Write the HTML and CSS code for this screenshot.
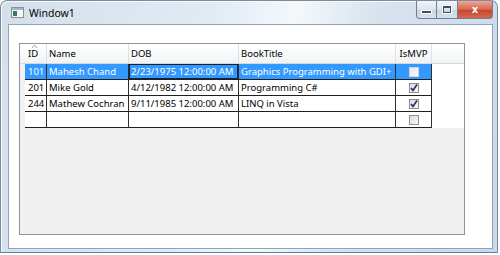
FILE: index.html
```html
<!DOCTYPE html>
<html lang="en">
  <head>
    <meta charset="UTF-8">
    <title>Window1</title>
    <link rel="stylesheet" href="styles.css">
  </head>
  <body>
    <div class="window">
      <div class="titlebar">
        <svg class="app-icon" width="13" height="11" viewBox="0 0 13 11">
          <rect x="0.5" y="0.5" width="12" height="10" fill="#f4f6f8" stroke="#8a9098"/>
          <rect x="1" y="1" width="11" height="2" fill="#9fb8d0"/>
          <rect x="2" y="4" width="4" height="5" fill="#3e7a5a"/>
        </svg>
        <span class="title">Window1</span>
        <div class="caption-buttons">
          <div class="cap-btn min"><span class="min-bar"></span></div>
          <div class="cap-btn max"><span class="max-box"></span></div>
          <div class="cap-btn close">x</div>
        </div>
      </div>

      <div class="client">
        <div class="grid">
          <div class="row header">
            <div class="rowhead"></div>
            <div class="cell c-id">
              <svg class="sort" width="5" height="3" viewBox="0 0 5 3"><path d="M0 3 L2.5 0 L5 3" fill="none" stroke="#9aa4b0"/></svg>
              ID
            </div>
            <div class="cell c-name">Name</div>
            <div class="cell c-dob">DOB</div>
            <div class="cell c-title">BookTitle</div>
            <div class="cell c-mvp">IsMVP</div>
            <div class="cell c-fill"></div>
          </div>

          <div class="row selected">
            <div class="rowhead"></div>
            <div class="cell c-id">101</div>
            <div class="cell c-name">Mahesh Chand</div>
            <div class="cell c-dob focused">2/23/1975 12:00:00 AM</div>
            <div class="cell c-title">Graphics Programming with GDI+</div>
            <div class="cell c-mvp"><span class="check"></span></div>
            <div class="cell c-fill"></div>
          </div>

          <div class="row">
            <div class="rowhead"></div>
            <div class="cell c-id">201</div>
            <div class="cell c-name">Mike Gold</div>
            <div class="cell c-dob">4/12/1982 12:00:00 AM</div>
            <div class="cell c-title">Programming C#</div>
            <div class="cell c-mvp"><span class="check checked"><svg width="8" height="8" viewBox="0 0 8 8"><path d="M1 4 L3 6.5 L7 0.5" fill="none" stroke="#1e2a6e" stroke-width="1.6"/></svg></span></div>
            <div class="cell c-fill"></div>
          </div>

          <div class="row">
            <div class="rowhead"></div>
            <div class="cell c-id">244</div>
            <div class="cell c-name">Mathew Cochran</div>
            <div class="cell c-dob">9/11/1985 12:00:00 AM</div>
            <div class="cell c-title">LINQ in Vista</div>
            <div class="cell c-mvp"><span class="check checked"><svg width="8" height="8" viewBox="0 0 8 8"><path d="M1 4 L3 6.5 L7 0.5" fill="none" stroke="#1e2a6e" stroke-width="1.6"/></svg></span></div>
            <div class="cell c-fill"></div>
          </div>

          <div class="row">
            <div class="rowhead"></div>
            <div class="cell c-id"></div>
            <div class="cell c-name"></div>
            <div class="cell c-dob"></div>
            <div class="cell c-title"></div>
            <div class="cell c-mvp"><span class="check"></span></div>
            <div class="cell c-fill"></div>
          </div>
        </div>
      </div>
    </div>
  </body>
</html>
```

FILE: styles.css
```css
body{
    margin: 0;
    background-color: white;
    font-family: "Noto Sans", "Liberation Sans", sans-serif;
}

.window{
    width: 485px;
    height: 248px;
    display: flex;
    flex-direction: column;
    border: 1px solid #7d8c9c;
    border-bottom-color: #3f8aa4;
    border-radius: 7px 7px 0 0;
    padding: 0 4px 3px 7px;
    background: linear-gradient(100deg, #d3dfeb 0%, #e2ebf4 40%, #f4f8fb 55%, #d8e3ee 70%, #cbd9e7 100%);
    box-shadow: inset 1px 1px 0 #f6f9fc;
}

.titlebar{
    height: 23px;
    display: flex;
    align-items: center;
}

.app-icon{
    margin-left: 3px;
    margin-right: 5px;
}

.title{
    font-size: 10.5px;
    color: #000;
}

.caption-buttons{
    margin-left: auto;
    align-self: flex-start;
    display: flex;
    height: 18px;
}

.cap-btn{
    height: 17px;
    border: 1px solid #6f7e90;
    border-top: none;
    display: flex;
    align-items: center;
    justify-content: center;
    background: linear-gradient(#f2f5f9, #dbe3ec 50%, #c7d3df 51%, #d8e2ec);
}

.min{
    width: 19px;
    border-radius: 0 0 0 4px;
}

.max{
    width: 20px;
    border-left: none;
}

.close{
    width: 34px;
    border-left: none;
    border-radius: 0 0 4px 0;
    background: linear-gradient(#e9a897, #d7654d 50%, #c4432c 51%, #d66a4e);
    color: white;
    font-family: "DejaVu Sans", sans-serif;
    font-weight: bold;
    font-size: 10px;
    line-height: 10px;
}

.min-bar{
    width: 9px;
    height: 2px;
    margin-top: 5px;
    background-color: #3f4d5e;
    border: 1px solid #fff;
}

.max-box{
    width: 6px;
    height: 4px;
    border: 1px solid #3f4d5e;
    border-top-width: 2px;
    box-shadow: 0 0 0 1px #fff;
}

.client{
    flex: 1;
    background-color: white;
    border: 1px solid #90a3bb;
    padding: 18px 27px 13px 10px;
    display: flex;
}

.grid{
    flex: 1;
    border: 1px solid #8a96a4;
    background-color: #f0f0f0;
    font-size: 9.5px;
    color: #000;
}

.row{
    display: flex;
    height: 16px;
}

.rowhead{
    width: 5px;
    flex-shrink: 0;
    background-color: #f0f0f0;
}

.cell{
    border-right: 1px solid #2e2e2e;
    border-bottom: 1px solid #1e1e1e;
    background-color: white;
    padding-left: 2px;
    line-height: 15px;
    white-space: nowrap;
    overflow: hidden;
    flex-shrink: 0;
    box-sizing: border-box;
    height: 16px;
}

.c-id{
    width: 22px;
    padding-left: 3px;
}

.c-name{
    width: 82px;
}

.c-dob{
    width: 110px;
}

.c-title{
    width: 157px;
}

.c-mvp{
    width: 36px;
    display: flex;
    justify-content: center;
    align-items: center;
    padding-left: 0;
}

.c-fill{
    flex: 1;
    border: none;
}

.header{
    height: 20px;
    background: linear-gradient(#ffffff, #f7f8f9 60%, #f1f2f4);
    border-bottom: 1px solid #d5d8dc;
    box-sizing: border-box;
}

.header .rowhead{
    background: transparent;
}

.header .cell{
    background: transparent;
    border-bottom: none;
    border-right: 1px solid #dde1e5;
    height: 19px;
    line-height: 20px;
    position: relative;
}

.header .c-fill{
    border-right: none;
}

.sort{
    position: absolute;
    left: 7px;
    top: 1px;
}

.selected .cell{
    background-color: #3399ff;
    color: white;
}

.selected .c-fill{
    background-color: white;
}

.focused{
    box-shadow: inset 0 0 0 1px #14213a;
}

.check{
    width: 10px;
    height: 10px;
    box-sizing: border-box;
    border: 1px solid #8e8f8f;
    background: linear-gradient(135deg, #dcdcdc, #f6f6f6);
    display: flex;
    align-items: center;
    justify-content: center;
}

.selected .check{
    border-color: #c8d8ec;
    background: linear-gradient(135deg, #e4e6ea, #fafafa);
}
```
